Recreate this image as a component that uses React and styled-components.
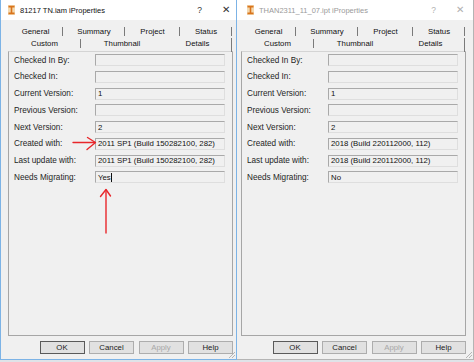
import styled, { createGlobalStyle } from "styled-components";

const GlobalStyle = createGlobalStyle`
  html, body {
    margin: 0;
    padding: 0;
    background: #dfe3e8;
  }
  * {
    box-sizing: border-box;
  }
`;

const rowOne = [
   { name: "General", width: 55 },
   { name: "Summary", width: 62 },
   { name: "Project", width: 55 },
   { name: "Status", width: 52 },
];

const rowTwo = [
   { name: "Custom", width: 73 },
   { name: "Thumbnail", width: 82 },
   { name: "Details", width: 69, selected: true },
];

const leftFields = [
   ["Checked In By:", ""],
   ["Checked In:", ""],
   ["Current Version:", "1"],
   ["Previous Version:", ""],
   ["Next Version:", "2"],
   ["Created with:", "2011 SP1 (Build 150282100, 282)"],
   ["Last update with:", "2011 SP1 (Build 150282100, 282)"],
   ["Needs Migrating:", "Yes", true],
];

const rightFields = [
   ["Checked In By:", ""],
   ["Checked In:", ""],
   ["Current Version:", "1"],
   ["Previous Version:", ""],
   ["Next Version:", "2"],
   ["Created with:", "2018 (Build 220112000, 112)"],
   ["Last update with:", "2018 (Build 220112000, 112)"],
   ["Needs Migrating:", "No"],
];

function AppIcon() {
   return (
      <svg width="7" height="10" viewBox="0 0 7 10">
         <rect x="0" y="0" width="7" height="10" fill="#f3d9b0" />
         <path d="M0.5 0.8 H6.5 V2.4 H4.3 V7.6 H6.5 V9.2 H0.5 V7.6 H2.7 V2.4 H0.5 Z" fill="#d9741c" />
      </svg>
   );
}

function Grip() {
   return (
      <GripBox width="9" height="9" viewBox="0 0 9 9">
         <path d="M8 2 L2 8 M8 5 L5 8" stroke="#b5b5b5" strokeWidth="1" />
      </GripBox>
   );
}

function Arrows() {
   return (
      <Overlay width="237" height="360" viewBox="0 0 237 360">
         <g stroke="#e8262a" strokeWidth="1.4" fill="none" strokeLinecap="round" strokeLinejoin="round">
            <path d="M73 142.5 L95 142.5" />
            <path d="M87.5 137.5 L95.5 142.5 L87 149.5" />
            <path d="M106 233 L106 190" />
            <path d="M100.5 196.5 L106 189.5 L110.5 196" />
         </g>
      </Overlay>
   );
}

function Dialog({ title, fields, active, titlePad, titleRight, padL, padR, children }) {
   return (
      <Window $active={active}>
         <TitleBar $pad={titlePad} $right={titleRight}>
            <AppIcon />
            <TitleText $active={active}>{title}</TitleText>
            <Controls $active={active}>
               <span>?</span>
               <Close>✕</Close>
            </Controls>
         </TitleBar>

         <Body $padL={padL} $padR={padR}>
            <Tabs>
               <TabRow>
                  {rowOne.map((t) => (
                     <Tab key={t.name} $w={t.width} $sep>
                        {t.name}
                     </Tab>
                  ))}
               </TabRow>
               <TabRow>
                  {rowTwo.map((t, i) => (
                     <Tab
                        key={t.name}
                        $w={t.width}
                        $sep={i === 0 || t.selected}
                        $selected={t.selected}
                     >
                        {t.name}
                     </Tab>
                  ))}
               </TabRow>
            </Tabs>

            <Panel>
               <FieldGrid>
                  {fields.map(([label, value, caret]) => (
                     <FieldRow key={label}>
                        <Label>{label}</Label>
                        <Field>
                           {value}
                           {caret && <Caret />}
                        </Field>
                     </FieldRow>
                  ))}
               </FieldGrid>
            </Panel>

            <ButtonRow>
               <Button $default>OK</Button>
               <Button>Cancel</Button>
               <Button $disabled>Apply</Button>
               <Button>Help</Button>
            </ButtonRow>
         </Body>
         <Grip />
         {children}
      </Window>
   );
}

export default function App() {
   return (
      <>
         <GlobalStyle />
         <Screen>
            <Dialog
               title="81217 TN.iam iProperties"
               fields={leftFields}
               active
               titlePad={7}
               titleRight={6}
               padL={7}
               padR={3}
            >
               <Arrows />
            </Dialog>
            <Dialog
               title="THAN2311_11_07.ipt iProperties"
               fields={rightFields}
               titlePad={10}
               titleRight={9}
               padL={4}
               padR={7}
            />
         </Screen>
      </>
   );
}

const Screen = styled.div`
   width: 474px;
   height: 362px;
   display: flex;
   overflow: hidden;
   font-family: "Liberation Sans", Arial, sans-serif;
   font-size: 7.8px;
   color: #111;
`;

const Window = styled.div`
   position: relative;
   width: 237px;
   height: 360px;
   background: #f0f0f0;
   display: flex;
   flex-direction: column;
   border: 1px solid ${(p) => (p.$active ? "#7cb3e6" : "#b4b4b4")};
   border-left-width: ${(p) => (p.$active ? "1px" : "0")};
   border-top: none;
   z-index: ${(p) => (p.$active ? 2 : 1)};
`;

const TitleBar = styled.div`
   height: 20px;
   background: #ffffff;
   display: flex;
   align-items: center;
   gap: 5px;
   padding-left: ${(p) => p.$pad}px;
   padding-right: ${(p) => p.$right}px;
`;

const TitleText = styled.span`
   font-size: 7.5px;
   color: ${(p) => (p.$active ? "#111" : "#9a9a9a")};
   white-space: nowrap;
`;

const Controls = styled.div`
   margin-left: auto;
   display: flex;
   align-items: center;
   gap: 20px;
   font-size: 8.5px;
   color: ${(p) => (p.$active ? "#333" : "#b0b0b0")};
`;

const Close = styled.span`
   font-size: 10px;
   line-height: 1;
`;

const Body = styled.div`
   flex: 1;
   display: flex;
   flex-direction: column;
   padding: 5px ${(p) => p.$padR}px 0 ${(p) => p.$padL}px;
`;

const Tabs = styled.div`
   display: flex;
   flex-direction: column;
`;

const TabRow = styled.div`
   display: flex;
   height: 12px;
`;

const Tab = styled.div`
   width: ${(p) => p.$w}px;
   display: flex;
   align-items: center;
   justify-content: center;
   position: relative;
   top: ${(p) => (p.$selected ? "-1px" : "0")};
   height: ${(p) => (p.$selected ? "15px" : "12px")};
   &::after {
      content: "";
      display: ${(p) => (p.$sep ? "block" : "none")};
      position: absolute;
      right: 0;
      top: 2px;
      bottom: ${(p) => (p.$selected ? "-1px" : "1px")};
      width: 1px;
      background: #7a7a7a;
   }
`;

const Panel = styled.div`
   margin-top: 2px;
   height: 285px;
   border: 1px solid #a6a6a6;
   border-top-color: #d4d4d4;
   padding: 2px 8px 0 5px;
`;

const FieldGrid = styled.div`
   display: flex;
   flex-direction: column;
   gap: 4.75px;
`;

const FieldRow = styled.div`
   display: grid;
   grid-template-columns: 81px 130px;
   align-items: center;
   height: 12px;
`;

const Label = styled.span`
   white-space: nowrap;
   font-size: 8.2px;
   color: #1e1e1e;
`;

const Field = styled.div`
   height: 12px;
   display: flex;
   align-items: center;
   padding-left: 2px;
   background: #f0f0f0;
   border: 1px solid #dedede;
   border-top-color: #a9a9a9;
   border-left-color: #a9a9a9;
   white-space: nowrap;
   color: #111;
`;

const Caret = styled.span`
   display: inline-block;
   width: 1px;
   height: 9px;
   background: #111;
`;

const ButtonRow = styled.div`
   display: flex;
   justify-content: flex-end;
   gap: 4.5px;
   margin-top: 5px;
`;

const Button = styled.div`
   width: 45px;
   height: 13px;
   display: flex;
   align-items: center;
   justify-content: center;
   background: #e1e1e1;
   border: 1px solid ${(p) => (p.$default ? "#5a5a5a" : "#adadad")};
   color: ${(p) => (p.$disabled ? "#a8a8a8" : "#1a1a1a")};
`;

const GripBox = styled.svg`
   position: absolute;
   right: 0;
   bottom: 0;
`;

const Overlay = styled.svg`
   position: absolute;
   left: -1px;
   top: 0;
   pointer-events: none;
`;
